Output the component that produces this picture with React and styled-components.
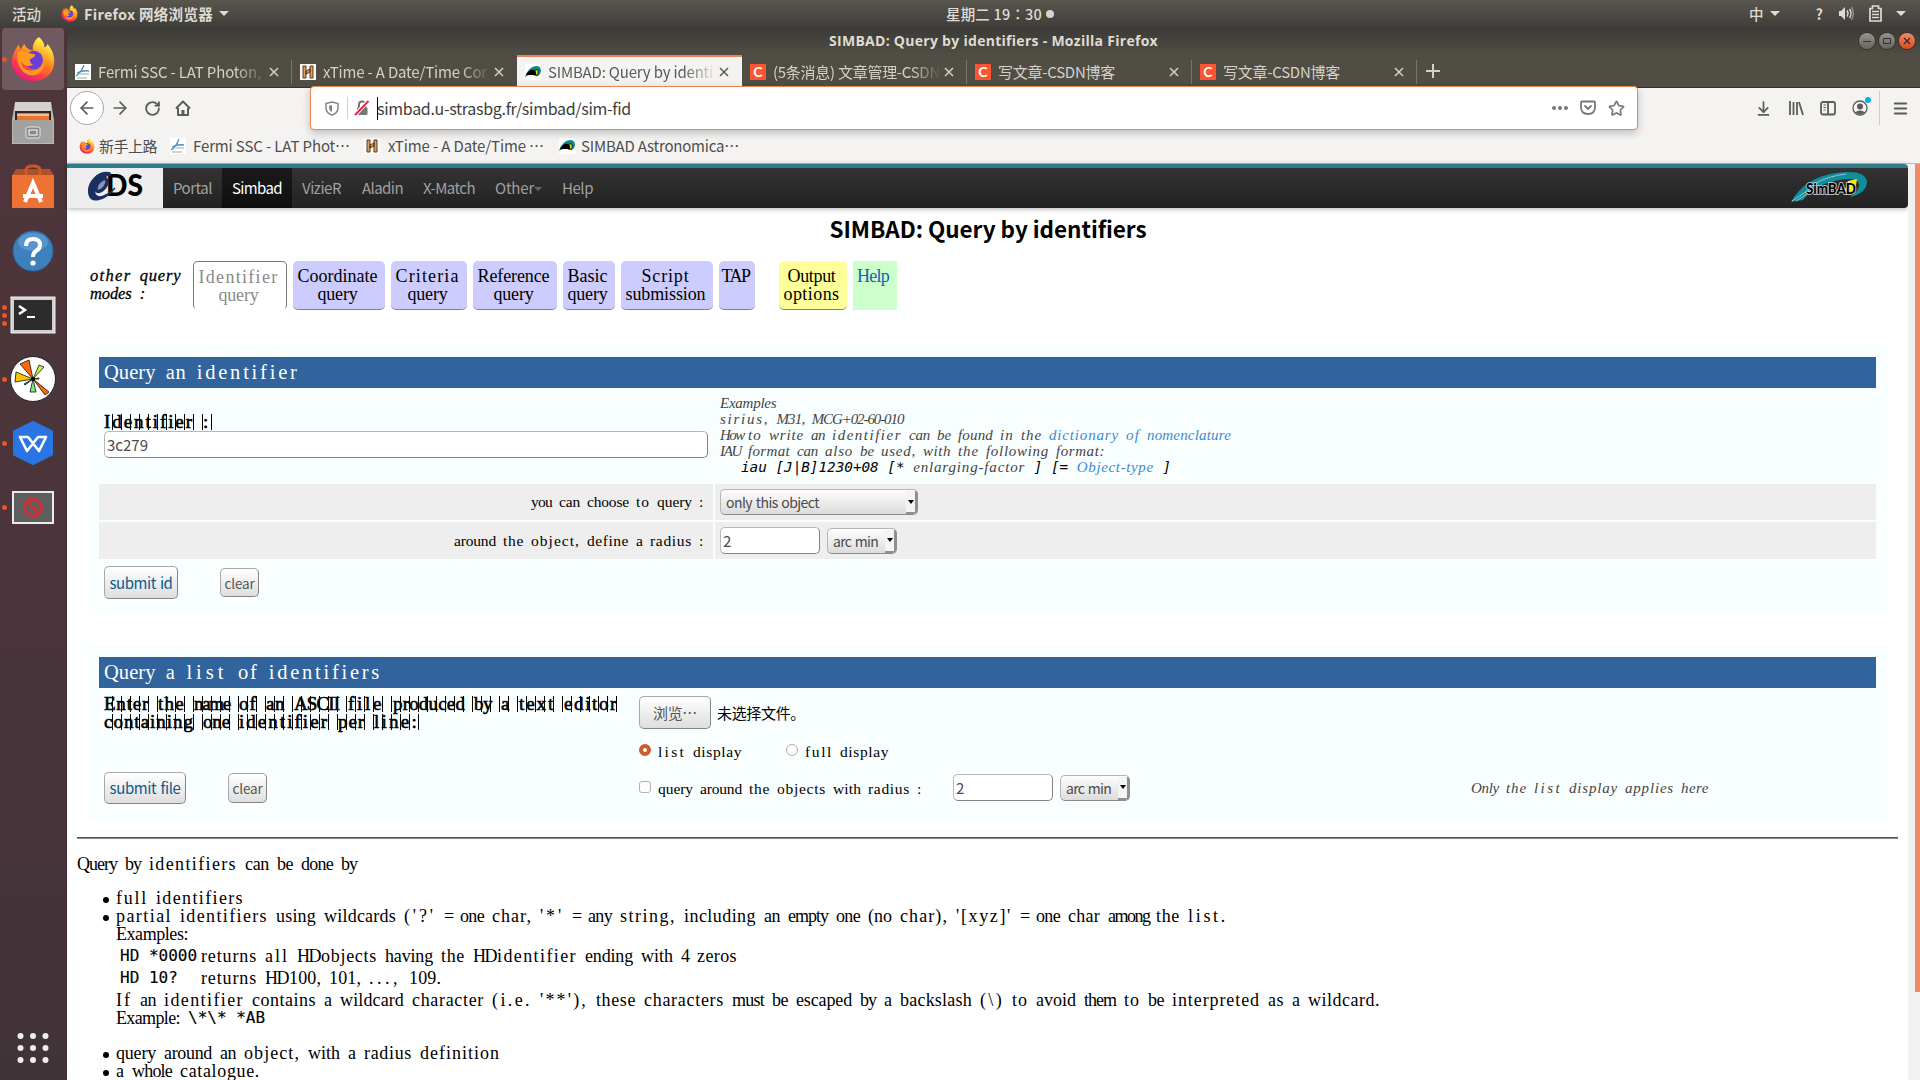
import React, { useLayoutEffect, useRef } from "react";
import styled, { createGlobalStyle, css } from "styled-components";
import {
  ArrowLeft,
  ArrowRight,
  RotateCw,
  ArrowDownToLine,
  Star,
  Menu,
} from "lucide-react";

const sans = `"Noto Sans CJK SC", sans-serif`;
const serif = `"Liberation Serif", serif`;
const mono = `"DejaVu Sans Mono", monospace`;

const GlobalStyle = createGlobalStyle`
  * { box-sizing: border-box; }
  body {
    margin: 0;
    overflow: hidden;
    background: #fff;
    font-family: ${sans};
    font-size: 15px;
    line-height: 18px;
  }
  svg { display: block; flex: none; }
`;

/* ---------- text helpers ---------- */

const Run = styled.span`
  white-space: pre;
`;

// Spreads every word over character cells of a fixed pitch. Wide words
// are only tightened a little and take the rest from the space after them
const Cells = ({ pitch = 8, children }) => {
  const ref = useRef(null);
  useLayoutEffect(() => {
    const space = parseFloat(getComputedStyle(ref.current).fontSize) * 0.25;
    [...ref.current.children].forEach((el) => {
      el.style.letterSpacing = "0px";
      el.style.wordSpacing = "0px";
      const total = el.textContent.length;
      const n = el.textContent.trim().length;
      const spaces = total - n;
      const width = el.getBoundingClientRect().width - spaces * space;
      const tracking = n ? Math.max(pitch - width / n, -1.5) : 0;
      el.style.letterSpacing = `${tracking}px`;
      if (spaces) {
        const rest = total * pitch - width - n * tracking;
        el.style.wordSpacing = `${rest / spaces - space - tracking}px`;
      }
    });
  });
  const words = children.match(/\S+\s*|^\s+/g);
  return (
    <Run ref={ref}>
      {words.map((word, i) => (
        <span key={i}>{word}</span>
      ))}
    </Run>
  );
};

// Tracks a short label out to a known width
const Fit = ({ w, children, ...rest }) => {
  const ref = useRef(null);
  useLayoutEffect(() => {
    const el = ref.current;
    el.style.letterSpacing = "0px";
    const width = el.getBoundingClientRect().width;
    el.style.letterSpacing = `${(w - width) / el.textContent.length}px`;
  });
  return (
    <Run ref={ref} {...rest}>
      {children}
    </Run>
  );
};

/* ---------- desktop ---------- */

const Desktop = styled.div`
  width: 1920px;
  height: 1080px;
  display: flex;
  flex-direction: column;
  overflow: hidden;
`;

const TopBar = styled.div`
  height: 28px;
  flex: none;
  display: grid;
  grid-template-columns: 1fr auto 1fr;
  align-items: center;
  padding: 0 14px 1px 12px;
  background: linear-gradient(#59564e, #3e3d39);
  color: #dfdbd2;
  font-weight: 500;
  font-size: 14.5px;
`;

const TopGroup = styled.div`
  display: flex;
  align-items: center;
  justify-content: ${(p) => p.$end && "flex-end"};
  gap: ${(p) => p.$gap || 0}px;
  margin-left: ${(p) => p.$ml || 0}px;
  font-weight: ${(p) => p.$bold && 700};
`;

const Clock = styled(TopGroup)`
  padding-left: 82px;
  font-family: "Noto Sans CJK TC", sans-serif;
`;

const Caret = styled.i`
  border: 5px solid transparent;
  border-top-color: ${(p) => p.$color || "#dfdbd2"};
  border-bottom: 0;
`;

const Dot = styled.i`
  width: 8px;
  height: 8px;
  border-radius: 50%;
  background: #d8d4cb;
`;

const Body = styled.div`
  flex: 1;
  display: flex;
  min-height: 0;
`;

const Dock = styled.div`
  width: 67px;
  flex: none;
  display: flex;
  flex-direction: column;
  background: linear-gradient(#4f353b, #4b343b 55%, #403338);
  border-right: 1px solid #432f35;
`;

const Slot = styled.div`
  height: ${(p) => (p.$active ? 62 : 64)}px;
  margin: ${(p) => (p.$active ? "0 2px 1px" : "0 2px")};
  border-radius: 4px;
  display: flex;
  align-items: center;
  background: ${(p) => (p.$active ? "#705a60" : "none")};
`;

const SlotIcon = styled.div`
  width: 48px;
  display: flex;
  justify-content: center;
`;

const Running = styled.div`
  width: 7px;
  display: flex;
  flex-direction: column;
  gap: 3px;

  i {
    width: 5px;
    height: 5px;
    border-radius: 50%;
    background: #e95420;
  }
`;

const AppsButton = styled.div`
  margin-top: auto;
  padding: 0 0 16px 17px;
`;

/* ---------- browser ---------- */

const Browser = styled.div`
  flex: 1;
  min-width: 0;
  display: flex;
  flex-direction: column;
`;

const TitleBar = styled.div`
  height: 27px;
  display: grid;
  grid-template-columns: 1fr auto 1fr;
  align-items: center;
  padding: 0 5px 1px;
  background: linear-gradient(#3b3a36, #504d45);
  color: #dfdbd2;
  font: 700 14px/18px "Open Sans", sans-serif;
`;

const WinButtons = styled.div`
  display: flex;
  justify-content: flex-end;
  gap: 4px;
`;

const WinButton = styled.span`
  width: 16px;
  height: 16px;
  border-radius: 50%;
  display: grid;
  place-items: center;
  background: ${(p) =>
    p.$close
      ? "linear-gradient(#f58a68, #df4a1c)"
      : "linear-gradient(#94928b, #66645c)"};
  box-shadow: 0 0 0 1px #33322e;
`;

const TabStrip = styled.div`
  height: 33px;
  display: flex;
  background: #504d45;
  border-bottom: 1px solid #34332f;
`;

const Tab = styled.div`
  width: 225px;
  height: 33px;
  padding: 0 13px 1px 8px;
  display: flex;
  align-items: center;
  color: #d5d1c8;
  position: relative;
  border-top: 2px solid transparent;

  ${(p) =>
    p.$active
      ? css`
          background: #f4f3f1;
          color: #5a5a5a;
          border-top-color: #ed8056;
        `
      : css`
          &::after {
            content: "";
            position: absolute;
            right: 0;
            top: 3px;
            height: 24px;
            border-right: 1px solid ${p.$last ? "#504d45" : "#77746c"};
          }
        `}
`;

const TabTitle = styled.div`
  flex: 1;
  margin: 0 4px 0 7px;
  line-height: 24px;
  white-space: nowrap;
  mask-image: ${(p) =>
    p.$fade ? "linear-gradient(90deg, #000 82%, transparent 101%)" : "none"};
`;

const NewTab = styled.div`
  padding: 9px 0 0 9px;
`;

const NavBar = styled.div`
  height: 42px;
  display: flex;
  align-items: flex-start;
  background: #f4f3f1;
  color: #5b5b58;
  padding: 0 11px 0 3px;
`;

const NavTools = styled.div`
  width: ${(p) => p.$w}px;
  height: 40px;
  display: flex;
  align-items: center;
  gap: ${(p) => p.$gap}px;
  margin-left: ${(p) => p.$ml};
`;

const BackButton = styled.span`
  width: 34px;
  height: 34px;
  flex: none;
  border: 1px solid #a9a8a4;
  border-radius: 50%;
  background: #fff;
  display: grid;
  place-items: center;
`;

const UrlBar = styled.div`
  width: 1328px;
  height: 44px;
  margin: -2px 0 0;
  position: relative;
  z-index: 2;
  display: flex;
  align-items: center;
  padding: 0 12px 0 14px;
  background: #fff;
  border: 1px solid #ee8259;
  border-radius: 4px;
  box-shadow: 0 3px 8px rgba(0, 0, 0, 0.22);
  color: #3d3d3d;
`;

const Divider = styled.i`
  width: 1px;
  height: ${(p) => p.$h}px;
  background: #cfceca;
  margin: ${(p) => p.$m || 0};
`;

const TextCursor = styled.i`
  width: 1px;
  height: 23px;
  background: #000;
  margin: 0 -1px 0 7px;
`;

const Url = styled.span`
  flex: 1;
  font-size: 16px;
`;

const Account = styled.span`
  position: relative;

  i {
    position: absolute;
    right: -3px;
    top: -3px;
    width: 6px;
    height: 6px;
    border-radius: 50%;
    background: #00b3f4;
  }
`;

const Bookmarks = styled.div`
  height: 34px;
  flex: none;
  display: flex;
  align-items: center;
  padding: 0 0 2px 12px;
  background: #f4f3f1;
  border-bottom: 1px solid #bdbcb9;
  color: #4e4e4e;
`;

const Bookmark = styled.span`
  display: flex;
  align-items: center;
  gap: ${(p) => p.$gap || 6}px;
  width: ${(p) => p.$w}px;
`;

/* ---------- page ---------- */

const Viewport = styled.div`
  flex: 1;
  display: flex;
  min-height: 0;
`;

const ScrollBar = styled.div`
  width: 12px;
  flex: none;
  background: #f2f1f0;
  padding-left: 7px;

  &::before {
    content: "";
    display: block;
    height: 828px;
    background: #f08b66;
  }
`;

const Page = styled.div`
  flex: 1;
  min-width: 0;
  background: #fff;
  font-family: ${serif};
  font-size: 18px;
  color: #000;
`;

const SiteNav = styled.div`
  height: 44px;
  border-top: 4px solid #2f7d8c;
  border-radius: 0 4px 4px 0;
  background: linear-gradient(#333, #222);
  box-shadow: 0 1px 5px rgba(0, 0, 0, 0.3);
  display: flex;
  font-family: ${sans};
  font-size: 15px;
`;

const LogoBox = styled.div`
  width: 96px;
  background: #eee;
  padding: 3px 0 0 21px;
`;

const SiteLink = styled.div`
  width: ${(p) => p.$w}px;
  padding: 11px 0 0 10px;
  display: flex;
  color: ${(p) => (p.$active ? "#fff" : "#a0a0a0")};
  background: ${(p) => (p.$active ? "linear-gradient(#1a1a1a, #0f0f0f)" : "none")};

  ${Caret} {
    margin-top: 8px;
    height: 4px;
    border-width: 4px 4px 0;
  }
`;

const SiteLogo = styled.div`
  margin: 2px 40px 0 auto;
`;

const Title = styled.h1`
  margin: 0;
  height: 53px;
  padding: 11px 0 0 1px;
  text-align: center;
  font: 700 22.5px/18px ${sans};
`;

const Modes = styled.div`
  display: flex;
  gap: 6px;
  height: 49px;
  margin-left: 23px;
`;

const ModesLabel = styled.div`
  width: 97px;
  padding-top: 6px;
  font-size: 16.5px;
  font-style: italic;
  -webkit-text-stroke: 0.3px #000;
`;

const Mode = styled.div`
  width: ${(p) => p.$w}px;
  padding: 6px 3px 0 0;
  text-align: center;
  color: #000;
  border-radius: 5px;
  border-bottom: 1px solid #7e7e86;
  background: ${(p) => p.$bg || "#ccccff"};

  ${(p) =>
    p.$current &&
    css`
      background: #fff;
      color: #8a8a8a;
      border: 1px solid #777;
      border-bottom-color: transparent;
    `}
  ${(p) =>
    p.$plain &&
    css`
      color: #0f62b8;
      border: 0;
      border-radius: 0;
      text-align: left;
      padding-left: 4px;
    `}
`;

const Spacer = styled.i`
  width: ${(p) => p.$w}px;
`;

const Panel = styled.section`
  margin: ${(p) => p.$top}px 20px 0 20.5px;
  height: ${(p) => p.$h}px;
  padding: 12px 12px 0 11.5px;
  background: #f9ffff;
`;

const PanelHead = styled.div`
  height: 31px;
  padding: 6px 0 0 5px;
  background: #31639c;
  color: #fff;
  font-size: 20.5px;
`;

const Columns = styled.div`
  display: grid;
  grid-template-columns: ${(p) => p.$cols};
  height: ${(p) => p.$h}px;
`;

const Ruled = styled.div`
  width: ${(p) => p.$w}px;
  height: 16px;
  margin-bottom: ${(p) => p.$mb || 0}px;
  font-size: 19px;
  line-height: 16px;
  -webkit-text-stroke: 0.6px #000;
  background: repeating-linear-gradient(
    90deg,
    transparent 0 8px,
    #000 8px 9px
  );
`;

const IdCell = styled.div`
  padding: ${(p) => p.$top}px 0 0 5px;
`;

const Input = styled.div`
  width: ${(p) => p.$w}px;
  height: 27px;
  padding: 4px 0 0 2px;
  border: 1px solid #b8b8b8;
  border-bottom-color: #828282;
  border-right-color: #828282;
  border-radius: 5px;
  background: #fff;
  color: #4a4a4a;
  font: 15px/18px ${sans};
`;

const Examples = styled.div`
  padding: 7px 0 0 5px;
  font-size: 15px;
  line-height: 16px;
  font-style: italic;
  color: #444;
`;

const Link = styled.a`
  color: #3a8ad0;
`;

const Iau = styled.div`
  padding: 0 0 0 21px;
  display: flex;
  white-space: pre;

  code {
    font: italic 14.3px/16px ${mono};
    color: #000;
  }
`;

const GreyRow = styled.div`
  display: grid;
  grid-template-columns: 614px 1fr;
  gap: 2px;
  height: ${(p) => p.$h}px;
  margin-bottom: 2px;
  font-size: 15.5px;
`;

const GreyCell = styled.div`
  background: #eee;
  display: flex;
  align-items: center;
  gap: 7px;
  padding: ${(p) => (p.$right ? "0 7px 0 0" : "0 0 0 5px")};
  justify-content: ${(p) => p.$right && "flex-end"};
`;

const SelectBox = styled.div`
  width: ${(p) => p.$w}px;
  height: 26px;
  display: flex;
  justify-content: space-between;
  border: 1px solid #b5b5b5;
  border-width: 1px 0 1px 1px;
  border-bottom-color: #8a8a8a;
  border-radius: 5px;
  overflow: hidden;
  background: linear-gradient(#fdfdfd, #dcdcdc);
  color: #4a4a4a;
  font: 14px/24px ${sans};
  word-spacing: 1px;
  padding-left: 5px;
`;

const SelectArrow = styled.i`
  width: 12px;
  margin-top: 1px;
  display: grid;
  place-items: center;
  border-right: 3px solid #8f8f8f;
  border-bottom: 2px solid #8f8f8f;
  background: #f4f4f2;

  ${Caret} {
    border-width: 4px 3.5px 0;
  }
`;

const Actions = styled.div`
  display: flex;
  align-items: center;
  padding-left: 5px;
  gap: 42px;
  margin-top: ${(p) => p.$top || 0}px;
`;

const Button = styled.div`
  width: ${(p) => p.$w}px;
  height: ${(p) => p.$h}px;
  display: flex;
  align-items: center;
  justify-content: center;
  border: 1px solid #a8a8a8;
  border-right-color: #858585;
  border-bottom-color: #858585;
  border-radius: 5px;
  background: linear-gradient(#fff, #dedede);
  color: ${(p) => (p.$primary ? "#0b5c8e" : "#555")};
  font: ${(p) => (p.$small ? 13.5 : 15)}px/18px ${sans};
  word-spacing: 1px;
`;

const FileCell = styled.div`
  padding-top: 8px;
`;

const Line = styled.div`
  display: flex;
  align-items: center;
  height: ${(p) => p.$h}px;
  margin-top: ${(p) => p.$top || 0}px;
  font-size: 15.5px;
`;

const FileStatus = styled.span`
  margin-left: 6px;
  font: 15px/18px ${sans};
`;

const Option = styled.label`
  display: flex;
  width: ${(p) => p.$w}px;
`;

const OptionText = styled.div`
  padding-top: 2px;
`;

const Tick = styled.i`
  width: 12px;
  height: 12px;
  margin: 3px 7px 0 0;
  border: 1px solid #b5b2ad;
  border-radius: ${(p) => (p.$radio ? "50%" : "3px")};
  background: #fdfdfd;

  ${(p) =>
    p.$on &&
    css`
      border: 4px solid #cf5a2b;
    `}
`;

const Hint = styled.div`
  width: 405px;
  margin-left: auto;
  font-style: italic;
  font-size: 15px;
  color: #444;
`;

const Rule = styled.div`
  height: 2px;
  margin: 16px 10px 16px;
  border-top: 1px solid #555;
  border-bottom: 1px solid #858585;
`;

const Prose = styled.div`
  padding-left: ${(p) => (p.$in ? 49 : 10)}px;
  height: ${(p) => p.$h || 18}px;
  display: flex;
  white-space: pre;

  code {
    width: ${(p) => p.$code}px;
    margin-left: ${(p) => (p.$code ? 4 : 0)}px;
    font: 16px/18px ${mono};
    -webkit-text-stroke: 0.15px #000;
  }
`;

const Bullet = styled.i`
  width: 6px;
  height: 6px;
  margin: 8px 7px 0 -13px;
  border-radius: 50%;
  background: #000;
`;

/* ---------- drawings ---------- */

const FirefoxIcon = ({ size }) => (
  <svg width={size} height={size} viewBox="0 0 48 48">
    <defs>
      <linearGradient id="fx" x1="0.8" y1="0" x2="0.25" y2="1">
        <stop offset="0.1" stopColor="#fff04a" />
        <stop offset="0.45" stopColor="#ff8a1c" />
        <stop offset="0.75" stopColor="#ff3a48" />
        <stop offset="1" stopColor="#e31587" />
      </linearGradient>
    </defs>
    <path
      d="M30 1c4 3 6 7 6 11 2-1 3-2 3-4 5 6 8 13 7 21-1 11-10 18-22 18S2 38 2 27c0-8 4-14 7-18l2 5 4-6c1 4 5 7 9 7-1-6 2-11 6-14z"
      fill="url(#fx)"
    />
    <circle cx="25" cy="25" r="9.5" fill="#6a3fd8" />
    <path
      d="M8 17c5-2 9-1 12 1l6 1c1 2-2 4-5 5-1 3 1 5 3 6-5 3-10 1-12-4-1 6 5 11 12 10 7 0 11-6 11-12 3 10-4 18-13 17C13 40 6 30 8 17z"
      fill="#ff9b1f"
    />
  </svg>
);

const FilesIcon = () => (
  <svg width="44" height="46" viewBox="0 0 44 46">
    <path d="M4 2h36l3 18v24H1V20z" fill="#b9b8b5" />
    <path d="M4 2h36v9H4z" fill="#d4d3d0" />
    <path d="M4 11h36v9H4z" fill="#2b2a29" />
    <path d="M6 13h32v7H6z" fill="#e9762c" />
    <path d="M6 15h32" stroke="#fff" strokeWidth="1" />
    <rect x="2" y="20" width="40" height="23" fill="#a3a2a0" />
    <rect x="15" y="27" width="14" height="11" rx="2" fill="#888" stroke="#e4e4e4" />
    <rect x="18" y="30" width="8" height="5" fill="none" stroke="#fff" />
  </svg>
);

const SoftwareIcon = () => (
  <svg width="44" height="46" viewBox="0 0 44 46">
    <path d="M15 12V6q0-4 7-4t7 4v6" fill="none" stroke="#d4531c" strokeWidth="3" />
    <path d="M5 5h34l4 7H1z" fill="#cf5a26" opacity="0.75" />
    <path d="M1 11h42v33H1z" fill="#ee7236" />
    <path d="M14 38l8-19 8 19" fill="none" stroke="#fff" strokeWidth="4" />
    <path d="M12 32h20" stroke="#fff" strokeWidth="4" />
  </svg>
);

const HelpIcon = () => (
  <svg width="42" height="42" viewBox="0 0 42 42">
    <circle cx="21" cy="21" r="20" fill="#3d80bd" stroke="#28689f" />
    <ellipse cx="21" cy="12" rx="15" ry="9" fill="#6da3d6" opacity="0.6" />
    <path d="M14 16q0-7 7-7t7 6q0 4-4 6-3 2-3 6" fill="none" stroke="#fff" strokeWidth="4" />
    <circle cx="21" cy="33" r="2.6" fill="#fff" />
  </svg>
);

const TerminalIcon = () => (
  <svg width="46" height="38" viewBox="0 0 46 38">
    <rect x="1" y="1" width="44" height="36" fill="#d2d1cf" stroke="#efefef" />
    <rect x="4" y="4" width="38" height="30" fill="#2b2c2b" />
    <path d="M9 10l6 4-6 4" fill="none" stroke="#fff" strokeWidth="2.5" />
    <path d="M17 21h8" stroke="#fff" strokeWidth="2" />
  </svg>
);

const PinwheelIcon = () => (
  <svg width="46" height="46" viewBox="0 0 46 46">
    <circle cx="23" cy="23" r="22.5" fill="#fff" stroke="#222" />
    <g stroke="#111" strokeWidth="0.8">
      <path d="M23 23L10 8l9-4z" fill="#ff6a00" />
      <path d="M23 23L5 26l1-10z" fill="#ffc400" />
      <path d="M23 23l6-14 5 2z" fill="#c9f23c" />
      <path d="M23 23l16 13-4 3z" fill="#ff6a00" />
      <path d="M23 23l3 13h-6z" fill="#7bea7b" />
      <path d="M23 23l-9 5 1 1zM23 23l6-1v1z" fill="#2c8c8c" />
    </g>
    <circle cx="23" cy="23" r="2" />
  </svg>
);

const WpsIcon = () => (
  <svg width="42" height="44" viewBox="0 0 42 44">
    <path d="M21 1l19 9.500v23L21 43 2 33.500v-23z" fill="#2a74e4" stroke="#2a74e4" strokeWidth="2" strokeLinejoin="round" />
    <path d="M8 16h8l11 14 7-14h-8L15 30z" fill="none" stroke="#fff" strokeWidth="2.6" strokeLinejoin="round" />
  </svg>
);

const BlockedIcon = () => (
  <svg width="42" height="33" viewBox="0 0 42 33">
    <rect x="1" y="1" width="40" height="31" fill="#5c5f5d" stroke="#ecebe9" strokeWidth="2" />
    <circle cx="21" cy="16.500" r="8.500" fill="none" stroke="#cf2f38" strokeWidth="3" />
    <path d="M15 11l12 11" stroke="#cf2f38" strokeWidth="3" />
  </svg>
);

const GridIcon = () => (
  <svg width="32" height="32" viewBox="0 0 32 32" fill="#eee">
    {[4, 16, 28].map((y) =>
      [3.5, 16, 28.5].map((x) => <circle key={`${x}-${y}`} cx={x} cy={y} r="3" />)
    )}
  </svg>
);

const FermiIcon = () => (
  <svg width="16" height="16" viewBox="0 0 16 16">
    <path d="M0 0h16v16H0z" fill="#fff" />
    <path d="M1 12Q6 9 9 1M2 9q6-3 12-2" fill="none" stroke="#4a8fc0" strokeWidth="1.300" />
    <path d="M5 10h9M2 14h10" stroke="#9aa" strokeWidth="1" />
  </svg>
);

const XTimeIcon = () => (
  <svg width="16" height="16" viewBox="0 0 16 16">
    <path d="M0 0h16v16H0z" fill="#fffaf0" />
    <path d="M3 2h3v12H3zM10 2h3v12h-3zM6 7l4-2v3l-4 2z" fill="#d9a066" stroke="#4a2a18" strokeWidth="0.900" />
  </svg>
);

const SimbadIcon = () => (
  <svg width="16" height="16" viewBox="0 0 16 16">
    <path d="M0 0h16v16H0z" fill="#fff" />
    <path d="M0 13Q3 3 11 2q5 0 5 5-1 6-6 5Q6 9 0 13z" fill="#0b8a8c" />
    <path d="M1 11q3-6 8-5l4 5z" fill="#000" />
    <path d="M10 6h3v5h-2z" fill="#f4e800" stroke="#000" strokeWidth="0.700" />
  </svg>
);

const CsdnBox = styled.span`
  width: 16px;
  height: 16px;
  flex: none;
  background: #fc5531;
  color: #fff;
  text-align: center;
  font: 700 14px/16px Lato, sans-serif;
`;

const CloseIcon = () => (
  <svg width="10" height="10" viewBox="0 0 10 10" stroke="currentColor" strokeWidth="1.500">
    <path d="M1 1l8 8M9 1L1 9" />
  </svg>
);

const HomeIcon = () => (
  <svg width="16" height="16" viewBox="0 0 16 16" fill="none" stroke="currentColor" strokeWidth="2">
    <path d="M1 8.500L8 1.500l7 7M3 8v7h10V8" strokeLinejoin="round" />
    <path d="M8 15v-5" strokeWidth="3" />
  </svg>
);

const ShieldIcon = () => (
  <svg width="14" height="15" viewBox="0 0 14 15" fill="none" stroke="#858585" strokeWidth="1.500">
    <path d="M1 2.500L7 1l6 1.500V7q0 5-6 7-6-2-6-7z" />
    <path d="M7 4v7q-3-1-3-4.500V4.700z" fill="#858585" stroke="none" />
  </svg>
);

const LockIcon = () => (
  <svg width="16" height="16" viewBox="0 0 16 16">
    <path d="M5 8V4.500q0-3 3-3t3 3V8" fill="none" stroke="#777" strokeWidth="2" />
    <rect x="3" y="7" width="10.500" height="8" rx="1.500" fill="#777" />
    <path d="M1 15L14 1" stroke="#fff" strokeWidth="4" />
    <path d="M1 15L14.500 1" stroke="#e22850" strokeWidth="2" />
  </svg>
);

const MeatballIcon = () => (
  <svg width="16" height="16" viewBox="0 0 16 16" fill="#777">
    <circle cx="2" cy="8" r="2" />
    <circle cx="8" cy="8" r="2" />
    <circle cx="14" cy="8" r="2" />
  </svg>
);

const PocketIcon = () => (
  <svg width="16" height="16" viewBox="0 0 16 16" fill="none" stroke="#777" strokeWidth="1.800" strokeLinecap="round">
    <path d="M2 1.500h12q1 0 1 1V7q0 7-7 7T1 7V2.500q0-1 1-1z" />
    <path d="M5 6l3 3 3-3" />
  </svg>
);

const LibraryIcon = () => (
  <svg width="16" height="16" viewBox="0 0 16 16" fill="none" stroke="currentColor" strokeWidth="1.800">
    <path d="M2 1v14M5.500 2v13M9 2v13M11 2l4 13" />
  </svg>
);

const SidebarIcon = () => (
  <svg width="16" height="16" viewBox="0 0 16 16" fill="none" stroke="currentColor" strokeWidth="1.800">
    <rect x="1" y="2" width="14" height="12.500" rx="2" />
    <path d="M8 2v12" />
    <path d="M3.500 5h2.500M3.500 7.500h2.500M3.500 10h2" strokeWidth="1" />
  </svg>
);

const AccountIcon = () => (
  <svg width="16" height="16" viewBox="0 0 16 16">
    <circle cx="8" cy="8" r="7" fill="none" stroke="currentColor" strokeWidth="1.300" />
    <circle cx="8" cy="6.500" r="3" fill="currentColor" />
    <path d="M3 12.500q5-4 10 0Q8 16 3 12.500z" fill="currentColor" />
  </svg>
);

const VolumeIcon = () => (
  <svg width="16" height="15" viewBox="0 0 16 15" fill="none" stroke="#dfdbd2" strokeWidth="1.400">
    <path d="M1 5h2l4-4v13l-4-4H1z" fill="#dfdbd2" stroke="none" />
    <path d="M9 4.500q2 3 0 6M11.500 3q3 4.500 0 9" />
    <path d="M13.500 1q3.500 6.500 0 13" opacity="0.5" />
  </svg>
);

const BatteryIcon = () => (
  <svg width="13" height="17" viewBox="0 0 13 17" fill="none" stroke="#dfdbd2" strokeWidth="1.700">
    <path d="M1 3.500h2.500V1h6v2.500H12V16H1z" />
    <path d="M3 6.500h7M3 9.500h7M3 12.500h7" />
  </svg>
);

const CdsLogo = () => (
  <svg width="56" height="32" viewBox="0 0 56 32">
    <text x="18" y="25" textLength="37" lengthAdjust="spacingAndGlyphs" fontFamily="Lato, sans-serif" fontWeight="900" fontSize="31">
      DS
    </text>
    <path
      d="M22 2C10-1-1 12 1 23c2 9 14 8 26-6-8 8-17 12-20 6C5 15 13 5 22 4z"
      fill="#1b2f63"
      stroke="#1b2f63"
      strokeWidth="1.500"
    />
    <ellipse
      cx="13.500"
      cy="14"
      rx="4"
      ry="7.500"
      transform="rotate(38 13.500 14)"
      fill="#8795b8"
      stroke="#1b2f63"
      strokeWidth="3.500"
    />
  </svg>
);

const SimbadLogo = () => (
  <svg width="78" height="36" viewBox="0 0 78 36">
    <path d="M1 32Q14 8 46 3q28-4 31 8 0 12-17 16 10-7 9-13-2-7-20-4-24 4-36 20z" fill="#0f8f9c" />
    <path d="M2 31L20 19M6 31l16-10M24 14Q38 6 56 4" stroke="#8ec7d4" strokeWidth="1" fill="none" />
    <path d="M54 22l4-11 9-2-2 12z" fill="#ffe800" />
    <text x="16" y="23.500" textLength="50" lengthAdjust="spacingAndGlyphs" fontFamily="Lato, sans-serif" fontWeight="900" fontSize="15" stroke="#ddd" strokeWidth="1.600" paintOrder="stroke">
      SimBAD
    </text>
  </svg>
);

/* ---------- data ---------- */

const dockItems = [
  { icon: <FirefoxIcon size={46} />, dots: 1, active: true },
  { icon: <FilesIcon /> },
  { icon: <SoftwareIcon /> },
  { icon: <HelpIcon /> },
  { icon: <TerminalIcon />, dots: 3 },
  { icon: <PinwheelIcon />, dots: 1 },
  { icon: <WpsIcon />, dots: 1 },
  { icon: <BlockedIcon />, dots: 1 },
];

const tabs = [
  { icon: <FermiIcon />, title: "Fermi SSC - LAT Photon,", w: 163, fade: true },
  { icon: <XTimeIcon />, title: "xTime - A Date/Time Cor", w: 164, fade: true },
  { icon: <SimbadIcon />, title: "SIMBAD: Query by identi", w: 165, fade: true, active: true },
  { icon: <CsdnBox>C</CsdnBox>, title: "(5条消息) 文章管理-CSDN", w: 167, fade: true },
  { icon: <CsdnBox>C</CsdnBox>, title: "写文章-CSDN博客", w: 117 },
  { icon: <CsdnBox>C</CsdnBox>, title: "写文章-CSDN博客", w: 117 },
];

const modes = [
  { w: 94, lines: ["Identifier", "query"], current: true },
  { w: 92, lines: ["Coordinate", "query"] },
  { w: 76, lines: ["Criteria", "query"] },
  { w: 84, lines: ["Reference", "query"] },
  { w: 52, lines: ["Basic", "query"] },
  { w: 92, lines: ["Script", "submission"] },
  { w: 36, lines: ["TAP"] },
];

const links = [
  { w: 59, text: 39, label: "Portal" },
  { w: 70, text: 50, label: "Simbad", active: true },
  { w: 60, text: 39, label: "VizieR" },
  { w: 61, text: 41, label: "Aladin" },
  { w: 72, text: 52, label: "X-Match" },
  { w: 67, text: 39, label: "Other", menu: true },
  { w: 52, text: 31, label: "Help" },
];

/* ---------- parts ---------- */

const Select = ({ w, textWidth, children }) => (
  <SelectBox $w={w}>
    <Fit w={textWidth}>{children}</Fit>
    <SelectArrow>
      <Caret $color="#000" />
    </SelectArrow>
  </SelectBox>
);

const ModeTab = ({ lines, ...rest }) => (
  <Mode {...rest}>
    {lines.map((line) => (
      <div key={line}>
        <Cells>{line}</Cells>
      </div>
    ))}
  </Mode>
);

const App = () => (
  <Desktop lang="zh-CN">
    <GlobalStyle />
    <TopBar>
      <TopGroup>
        <Fit w={29}>活动</Fit>
        <TopGroup $gap={6} $ml={20} $bold>
          <FirefoxIcon size={17} />
          <Fit w={129}>Firefox 网络浏览器</Fit>
          <Caret />
        </TopGroup>
      </TopGroup>
      <Clock $gap={4} lang="zh-TW">
        <Fit w={96}>星期二 19：30</Fit>
        <Dot />
      </Clock>
      <TopGroup $end $gap={14}>
        <TopGroup $gap={6}>
          中<Caret />
        </TopGroup>
        <TopGroup $gap={15} $ml={22}>
          <b>?</b>
          <VolumeIcon />
          <BatteryIcon />
        </TopGroup>
        <Caret />
      </TopGroup>
    </TopBar>

    <Body>
      <Dock>
        {dockItems.map(({ icon, dots = 0, active }, i) => (
          <Slot key={i} $active={active}>
            <Running>
              {Array.from({ length: dots }, (_, n) => (
                <i key={n} />
              ))}
            </Running>
            <SlotIcon>{icon}</SlotIcon>
          </Slot>
        ))}
        <AppsButton>
          <GridIcon />
        </AppsButton>
      </Dock>

      <Browser>
        <TitleBar>
          <span />
          <Fit w={329}>SIMBAD: Query by identifiers - Mozilla Firefox</Fit>
          <WinButtons>
            <WinButton>
              <svg width="8" height="8" stroke="#33322e">
                <path d="M0 4.500h8" />
              </svg>
            </WinButton>
            <WinButton>
              <svg width="8" height="8" stroke="#33322e" fill="none">
                <path d="M.5 1.500h7v5h-7z" />
              </svg>
            </WinButton>
            <WinButton $close>
              <svg width="8" height="8" stroke="#33322e" strokeWidth="1.400">
                <path d="M1 1l6 6M7 1L1 7" />
              </svg>
            </WinButton>
          </WinButtons>
        </TitleBar>

        <TabStrip>
          {tabs.map(({ icon, title, w, fade, active }, i) => (
            <Tab key={i} $active={active} $last={i === 1}>
              {icon}
              <TabTitle $fade={fade}>
                <Fit w={w}>{title}</Fit>
              </TabTitle>
              <CloseIcon />
            </Tab>
          ))}
          <NewTab>
            <svg width="14" height="14" stroke="#d5d1c8" strokeWidth="2">
              <path d="M7 0v14M0 7h14" />
            </svg>
          </NewTab>
        </TabStrip>

        <NavBar>
          <NavTools $w={240} $gap={14}>
            <BackButton>
              <ArrowLeft size={20} />
            </BackButton>
            <NavTools $gap={14} $ml="-8px">
              <ArrowRight size={20} />
              <RotateCw size={17} strokeWidth={2.6} />
              <HomeIcon />
            </NavTools>
          </NavTools>
          <UrlBar>
            <ShieldIcon />
            <Divider $h={22} $m="0 6px 0 8px" />
            <LockIcon />
            <TextCursor />
            <Url>
              <Fit w={254}>simbad.u-strasbg.fr/simbad/sim-fid</Fit>
            </Url>
            <NavTools $gap={12}>
              <MeatballIcon />
              <PocketIcon />
              <Star size={17} color="#777" strokeWidth={2.4} />
            </NavTools>
          </UrlBar>
          <NavTools $gap={16} $ml="auto">
            <ArrowDownToLine size={17} strokeWidth={2.4} />
            <LibraryIcon />
            <SidebarIcon />
            <Account>
              <AccountIcon />
              <i />
            </Account>
            <Divider $h={34} $m="0 -4px 0 -5px" />
            <Menu size={17} strokeWidth={2.8} />
          </NavTools>
        </NavBar>

        <Bookmarks>
          <Bookmark $w={91} $gap={4}>
            <FirefoxIcon size={16} />
            <Fit w={58}>新手上路</Fit>
          </Bookmark>
          <Bookmark $w={194} $gap={7}>
            <FermiIcon />
            <Fit w={157}>Fermi SSC - LAT Phot⋯</Fit>
          </Bookmark>
          <Bookmark $w={195} $gap={8}>
            <XTimeIcon />
            <Fit w={156}>xTime - A Date/Time ⋯</Fit>
          </Bookmark>
          <Bookmark>
            <SimbadIcon />
            <Fit w={158}>SIMBAD Astronomica⋯</Fit>
          </Bookmark>
        </Bookmarks>

        <Viewport>
          <Page>
            <SiteNav>
              <LogoBox>
                <CdsLogo />
              </LogoBox>
              {links.map(({ w, text, label, active, menu }) => (
                <SiteLink key={label} $w={w} $active={active}>
                  <Fit w={text}>{label}</Fit>
                  {menu && <Caret $color="#666" />}
                </SiteLink>
              ))}
              <SiteLogo>
                <SimbadLogo />
              </SiteLogo>
            </SiteNav>

            <Title>
              <Fit w={317}>SIMBAD: Query by identifiers</Fit>
            </Title>

            <Modes>
              <ModesLabel>
                <Cells pitch={8.3}>other query</Cells>
                <br />
                <Cells pitch={8.3}>modes :</Cells>
              </ModesLabel>
              {modes.map(({ w, lines, current }) => (
                <ModeTab key={lines[0]} $w={w} $current={current} lines={lines} />
              ))}
              <Spacer $w={12} />
              <ModeTab $w={68} $bg="#ffff99" lines={["Output", "options"]} />
              <ModeTab $w={44} $bg="#ccffcc" $plain lines={["Help"]} />
            </Modes>

            <Panel $top={35} $h={270}>
              <PanelHead>
                <Cells pitch={10.3}>Query an identifier</Cells>
              </PanelHead>
              <Columns $cols="616px 1fr" $h={96}>
                <IdCell $top={26}>
                  <Ruled $w={108} $mb={1}>
                    <Cells pitch={9}>Identifier :</Cells>
                  </Ruled>
                  <Input $w={604}>3c279</Input>
                </IdCell>
                <Examples>
                  <div>
                    <Cells pitch={7.05}>Examples</Cells>
                  </div>
                  <div>
                    <Cells pitch={7.05}>sirius, M31, MCG+02-60-010</Cells>
                  </div>
                  <div>
                    <Cells pitch={7}>How to write an identifier can be found in the </Cells>
                    <Link>
                      <Cells pitch={7}>dictionary of nomenclature</Cells>
                    </Link>
                  </div>
                  <div>
                    <Cells pitch={7}>IAU format can also be used, with the following format:</Cells>
                  </div>
                  <Iau>
                    <code>iau [J|B]1230+08 [* </code>
                    <Cells pitch={7}>enlarging-factor</Cells>
                    <code> ] [= </code>
                    <Link>
                      <Cells pitch={7}>Object-type</Cells>
                    </Link>
                    <code> ]</code>
                  </Iau>
                </Examples>
              </Columns>
              <GreyRow $h={36}>
                <GreyCell $right>
                  <Cells pitch={7}>you can choose to query :</Cells>
                </GreyCell>
                <GreyCell>
                  <Select w={198} textWidth={93}>only this object</Select>
                </GreyCell>
              </GreyRow>
              <GreyRow $h={37}>
                <GreyCell $right>
                  <Cells pitch={7}>around the object, define a radius :</Cells>
                </GreyCell>
                <GreyCell>
                  <Input $w={100}>2</Input>
                  <Select w={70} textWidth={45}>arc min</Select>
                </GreyCell>
              </GreyRow>
              <Actions $top={7}>
                <Button $w={74} $h={33} $primary>
                  <Fit w={63}>submit id</Fit>
                </Button>
                <Button $w={39} $h={29} $small>
                  <Fit w={30}>clear</Fit>
                </Button>
              </Actions>
            </Panel>

            <Panel $top={30} $h={176}>
              <PanelHead>
                <Cells pitch={10.3}>Query a list of identifiers</Cells>
              </PanelHead>
              <Columns $cols="540px 1fr" $h={133}>
                <div>
                  <IdCell $top={8}>
                    <Ruled $w={513} $mb={2}>
                      <Cells pitch={9}>Enter the name of an ASCII file produced by a text editor</Cells>
                    </Ruled>
                    <Ruled $w={315}>
                      <Cells pitch={9}>containing one identifier per line:</Cells>
                    </Ruled>
                  </IdCell>
                  <Actions $top={42}>
                    <Button $w={82} $h={32} $primary>
                      <Fit w={71}>submit file</Fit>
                    </Button>
                    <Button $w={39} $h={30} $small>
                      <Fit w={30}>clear</Fit>
                    </Button>
                  </Actions>
                </div>
                <FileCell>
                  <Line $h={33}>
                    <Button $w={72} $h={33}>
                      <Fit w={44}>浏览⋯</Fit>
                    </Button>
                    <FileStatus>
                      <Fit w={88}>未选择文件。</Fit>
                    </FileStatus>
                  </Line>
                  <Line $h={22} $top={11}>
                    <Option $w={147}>
                      <Tick $radio $on />
                      <OptionText>
                        <Cells pitch={7}>list display</Cells>
                      </OptionText>
                    </Option>
                    <Option>
                      <Tick $radio />
                      <OptionText>
                        <Cells pitch={7}>full display</Cells>
                      </OptionText>
                    </Option>
                  </Line>
                  <Line $h={27} $top={12}>
                    <Option $w={314}>
                      <Tick />
                      <OptionText>
                        <Cells pitch={7}>query around the objects with radius :</Cells>
                      </OptionText>
                    </Option>
                    <Input $w={100}>2</Input>
                    <Spacer $w={7} />
                    <Select w={70} textWidth={45}>arc min</Select>
                    <Hint>
                      <Cells pitch={7}>Only the list display applies here</Cells>
                    </Hint>
                  </Line>
                </FileCell>
              </Columns>
            </Panel>

            <Rule />

            <Prose $h={34}>
              <Cells>Query by identifiers can be done by</Cells>
            </Prose>
            <Prose $in>
              <Bullet />
              <Cells>full identifiers</Cells>
            </Prose>
            <Prose $in>
              <Bullet />
              <Cells>{"partial identifiers using wildcards ('?' = one char, '*' = any string, including an empty one (no char), '[xyz]' = one char among the list."}</Cells>
            </Prose>
            <Prose $in $h={22}>
              <Cells>Examples:</Cells>
            </Prose>
            <Prose $in $h={22} $code={81}>
              <code>HD *0000</code>
              <Cells>returns all HD objects having the HD identifier ending with 4 zeros</Cells>
            </Prose>
            <Prose $in $h={22} $code={81}>
              <code>HD 10?</code>
              <Cells>returns HD 100, 101, ..., 109.</Cells>
            </Prose>
            <Prose $in>
              <Cells>{"If an identifier contains a wildcard character (i.e. '**'), these characters must be escaped by a backslash (\\) to avoid them to be interpreted as a wildcard."}</Cells>
            </Prose>
            <Prose $in $h={35}>
              <Cells>{"Example: "}</Cells>
              <code>{"\\*\\* *AB"}</code>
            </Prose>
            <Prose $in>
              <Bullet />
              <Cells>query around an object, with a radius definition</Cells>
            </Prose>
            <Prose $in>
              <Bullet />
              <Cells>a whole catalogue.</Cells>
            </Prose>
          </Page>
          <ScrollBar />
        </Viewport>
      </Browser>
    </Body>
  </Desktop>
);

export default App;
